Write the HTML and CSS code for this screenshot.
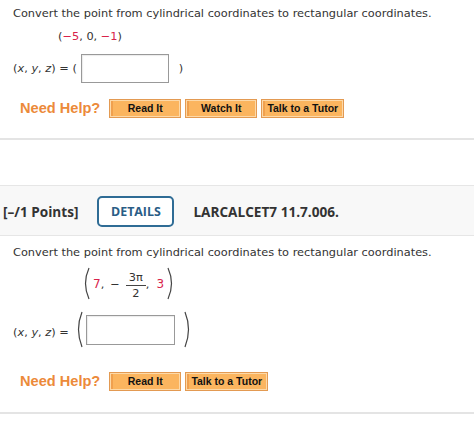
FILE: index.html
```html
<!DOCTYPE html>
<html>
<head>
<meta charset="utf-8">
<link rel="stylesheet" href="styles.css">
</head>
<body>
<section class="question q1">
  <p class="prompt">Convert the point from cylindrical coordinates to rectangular coordinates.</p>
  <div class="point point1">(<span class="red">−5</span>, 0, <span class="red">−1</span>)</div>
  <div class="answer answer1">
    <span class="lbl">(<i>x</i>, <i>y</i>, <i>z</i>) = (</span>
    <span class="box box1"></span>
    <span class="close1">)</span>
  </div>
  <div class="help help1">
    <span class="need">Need Help?</span>
    <button class="hbtn">Read It</button>
    <button class="hbtn">Watch It</button>
    <button class="hbtn tutor">Talk to a Tutor</button>
  </div>
</section>
<div class="sep"></div>
<div class="gap"></div>
<header class="qhead">
  <span class="points">[–/1 Points]</span>
  <span class="details">DETAILS</span>
  <span class="code">LARCALCET7 11.7.006.</span>
</header>
<section class="question q2">
  <p class="prompt">Convert the point from cylindrical coordinates to rectangular coordinates.</p>
  <div class="point point2">
    <svg class="paren" width="8" height="33" viewBox="0 0 8 33"><path d="M7 1 Q0 16.5 7 32" fill="none" stroke="#444" stroke-width="1.2"/></svg>
    <span class="red num">7</span><span class="comma">,</span>
    <span class="minus">−</span>
    <span class="frac"><span class="numr">3π</span><span class="den">2</span></span><span class="comma">,</span>
    <span class="red num">3</span>
    <svg class="paren rparen" width="8" height="33" viewBox="0 0 8 33"><path d="M1 1 Q8 16.5 1 32" fill="none" stroke="#444" stroke-width="1.2"/></svg>
  </div>
  <div class="answer answer2">
    <span class="lbl">(<i>x</i>, <i>y</i>, <i>z</i>) =</span>
    <svg class="bigparen" width="8" height="37" viewBox="0 0 8 37"><path d="M7 1 Q0 18.5 7 36" fill="none" stroke="#444" stroke-width="1.2"/></svg>
    <span class="box box2"></span>
    <svg class="bigparen rp" width="8" height="37" viewBox="0 0 8 37"><path d="M1 1 Q8 18.5 1 36" fill="none" stroke="#444" stroke-width="1.2"/></svg>
  </div>
  <div class="help help2">
    <span class="need">Need Help?</span>
    <button class="hbtn">Read It</button>
    <button class="hbtn tutor">Talk to a Tutor</button>
  </div>
</section>
<div class="sep sep2"></div>
</body>
</html>
```
FILE: styles.css
```css
* { box-sizing: border-box; }
html, body { margin: 0; padding: 0; background: #fff; }
body {
  font-family: "DejaVu Sans", Verdana, sans-serif;
  font-size: 11.35px;
  color: #333;
  width: 474px;
  overflow: hidden;
}
.question { padding-left: 13px; }
.prompt { margin: 0; line-height: 14px; }
.q1 { padding-top: 6px; }
.red { color: #d8234b; }
i { font-style: italic; }

.point1 { margin-top: 9px; margin-left: 45px; line-height: 14px; }

.answer { display: flex; align-items: center; }
.answer1 { margin-top: 10px; height: 30px; }
.answer1 .lbl { margin-right: 4px; }
.box {
  display: inline-block;
  border: 1px solid #999;
  background: #fff;
  box-shadow: inset 1px 1px 1px rgba(0,0,0,0.08);
}
.box1 { width: 88px; height: 29px; }
.close1 { margin-left: 10px; }

.help { display: flex; align-items: center; padding-left: 7px; }
.help1 { margin-top: 15px; height: 20px; }
.need {
  font-family: "Liberation Sans", Arial, sans-serif;
  font-weight: bold;
  font-size: 14.6px;
  color: #ec8a3a;
  margin-right: 9px;
}
.hbtn {
  font-family: "Liberation Sans", Arial, sans-serif;
  font-weight: bold;
  font-size: 10.5px;
  color: #111;
  width: 72px;
  height: 19px;
  padding: 0;
  margin-right: 4px;
  border: 1px solid #e39a52;
  background: #fbb55f;
  box-shadow: inset 0 0 0 1px #fdd9a8, inset 2px 0 0 1px #f0a04e;
  line-height: 17px;
}
.hbtn.tutor { width: 83px; }

.sep { height: 2px; background: #e4e4e4; margin-top: 20px; }
.gap { height: 45px; }

.qhead {
  display: flex;
  align-items: center;
  height: 51px;
  background: #f8f8f8;
  border-top: 1px solid #e6e6e6;
  border-bottom: 1px solid #e6e6e6;
  padding-left: 3px;
  padding-top: 1px;
  font-family: "Open Sans", sans-serif;
  font-weight: bold;
  font-size: 13.6px;
  color: #333;
}
.points { margin-right: 19px; }
.details {
  display: inline-flex;
  align-items: center;
  justify-content: center;
  width: 77px;
  height: 31px;
  border: 2px solid #2f6c95;
  border-radius: 5px;
  background: #fff;
  color: #2a5d86;
  font-size: 12.4px;
  font-weight: 700;
  margin-right: 19px;
}

.q2 .prompt { margin-top: 9px; }
.point2 {
  display: flex;
  align-items: center;
  margin-left: 69px;
  margin-top: 8px;
  height: 33px;
}
.point2 .num { margin-left: 3px; font-size: 12px; }
.comma { margin-right: 4px; }
.minus { margin: 0 6px 0 2px; }
.frac {
  display: inline-flex;
  flex-direction: column;
  align-items: center;
  line-height: 13px;
  margin-top: 3px;
}
.numr { border-bottom: 1px solid #444; padding: 0 3px 1px; }
.den { padding-top: 1px; }
.rparen { margin-left: 3px; }

.answer2 { margin-top: 11px; height: 37px; }
.answer2 .lbl { margin-right: 6px; position: relative; top: 2px; }
.box2 { width: 89px; height: 30px; margin-left: 3px; }
.rp { margin-left: 9px; }

.help2 { margin-top: 23px; height: 20px; }

.sep2 { margin-top: 21px; }
```
